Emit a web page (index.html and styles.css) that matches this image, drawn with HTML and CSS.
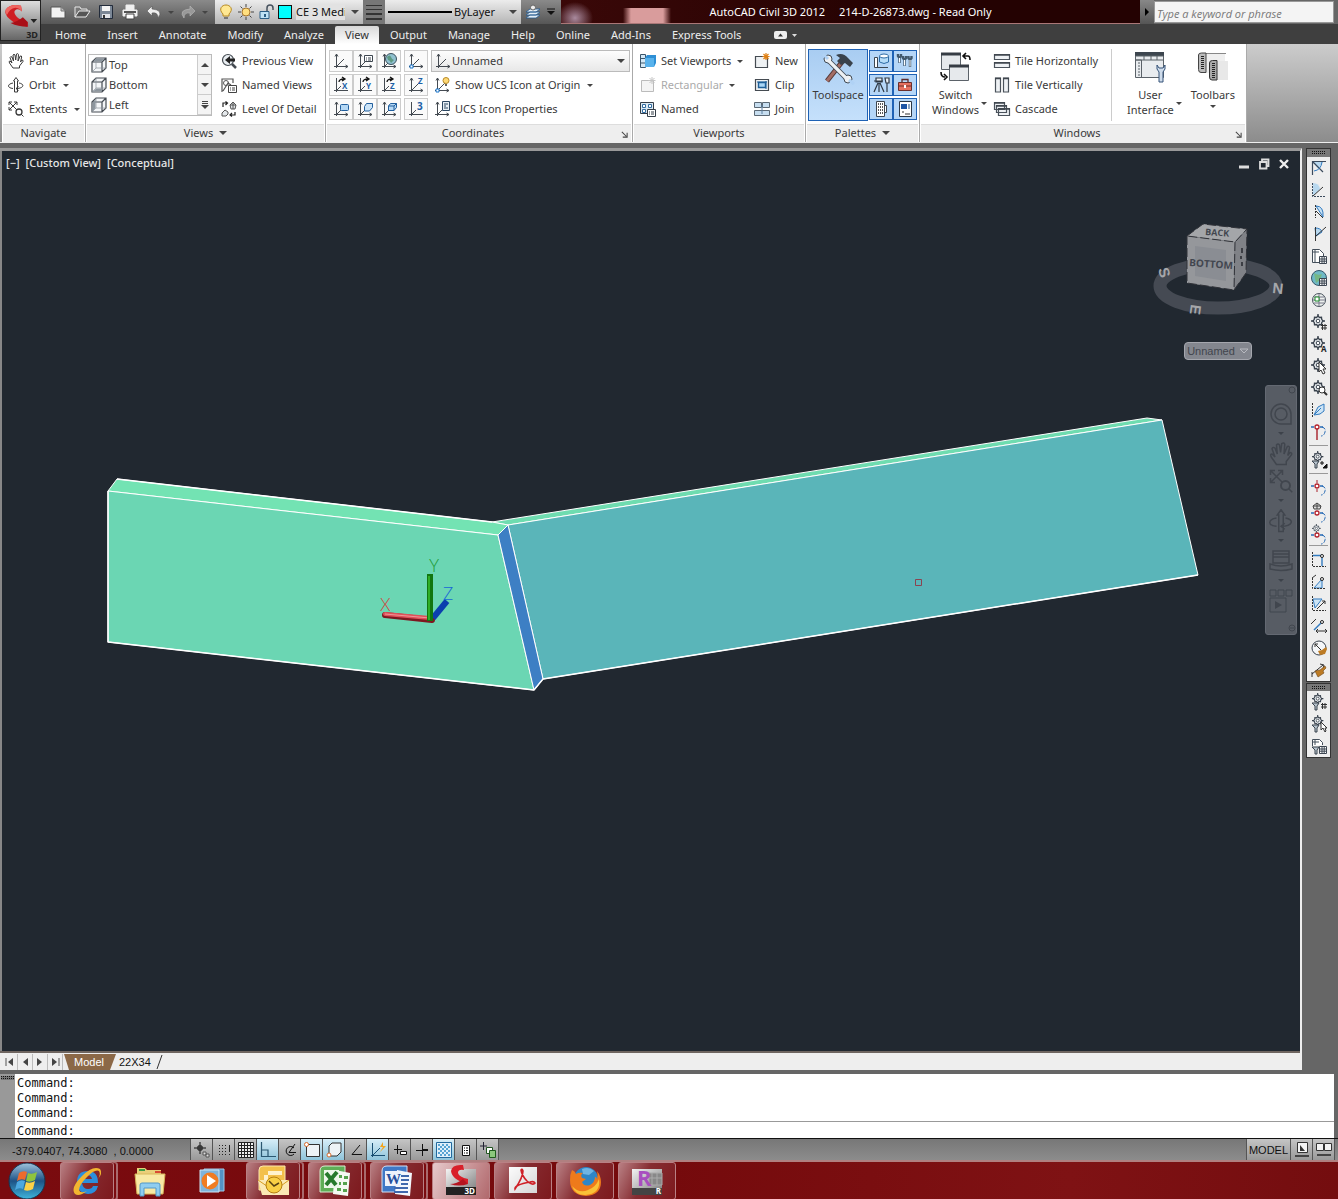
FILE: index.html
```html
<!DOCTYPE html>
<html lang="en">
<head>
<meta charset="utf-8">
<title>AutoCAD Civil 3D 2012 - 214-D-26873.dwg</title>
<link rel="stylesheet" href="styles.css">
</head>
<body>
<svg class="sprite" aria-hidden="true">
  <symbol id="axes" viewBox="0 0 16 16"><path d="M3.500 1v14M1 13.500h14M4 13l7-7M2 3.500L3.500 1 5 3.500M12.500 12l2.500 1.500-2.500 1.500" fill="none" stroke="#454b52"/></symbol>
  <symbol id="cube" viewBox="0 0 16 16"><path d="M1 5l4-4h10v10l-4 4H1zM1 5h10v10M11 5l4-4" fill="#f4f6f8" stroke="#454b52" stroke-width="1.200"/><path d="M5 1v10h10M5 11l-4 4" fill="none" stroke="#8a939c" stroke-width=".7"/></symbol>
  <symbol id="gear" viewBox="0 0 16 16"><path d="M7 0v14M0 7h14" stroke="#39424d" stroke-width="1.400"/><path d="M7 2l1.500 1.500 2-.2.200 2L12 7l-1.300 1.700-.2 2-2-.2L7 12l-1.500-1.500-2 .2-.2-2L2 7l1.300-1.700.2-2 2 .2z" fill="#e9edf0" stroke="#39424d" stroke-width="1.300"/><circle cx="7" cy="7" r="1.800" fill="#fff" stroke="#39424d"/></symbol>
  <symbol id="gridlet" viewBox="0 0 8 8"><path d="M.5.5h7v7h-7zM3 .5v7M5.200.5v7M.5 3h7M.5 5.200h7" fill="#fff" stroke="#3c4652"/></symbol>
  <symbol id="node" viewBox="0 0 16 16"><path d="M0 5h3M9 5h3" stroke="#276bb5" stroke-width="1.400"/><path d="M11 5q4 1 3 5t-4 4" fill="none" stroke="#276bb5" stroke-dasharray="4 1.500"/><circle cx="6" cy="5" r="2" fill="#fff" stroke="#b3202c" stroke-width="1.300"/></symbol>
  <symbol id="hand" viewBox="0 0 16 16"><path d="M5 15L1.500 10Q.5 8 2 8l2 2-2-5.500Q2.500 3 4 4l1.500 4L5 2q1-1.500 2 0l.7 5L8.500 1q1.500-1 2 .5L10 8l2.200-5q1.500-.5 1.500 1L12.500 9l1.500-2q1.500 0 1 1.500L11.500 13v2z" fill="none" stroke="currentColor"/></symbol>
  <symbol id="extents" viewBox="0 0 16 16"><path d="M1 1l8 8M9 1L1 9M1 4V1h3M6 1h3v3M1 6v3h3M13 13l2.500 2.500" fill="none" stroke="currentColor"/><circle cx="11" cy="11" r="3" fill="none" stroke="currentColor" stroke-width="1.300"/></symbol>
  <symbol id="orbit" viewBox="0 0 16 16"><path d="M8 .5L10.500 4H9.500v11h-3V4h-1zM5 6C-1 7-1 11 5 11.500M11 6c6 1 5 5.500-3 5.500M10.500 9.500L8 11.500l2.500 2" fill="none" stroke="currentColor"/></symbol>
  <linearGradient id="orb" x2="0" y2="1"><stop stop-color="#9fc3dd"/><stop offset=".5" stop-color="#1d5285"/><stop offset="1" stop-color="#3fb5dc"/></linearGradient>
  <linearGradient id="steel" x2="1" y2="1"><stop stop-color="#f3f3f3"/><stop offset="1" stop-color="#777"/></linearGradient>
</svg>

<header class="top">
  <button class="app" aria-label="Application menu">
    <svg viewBox="0 0 40 40"><path d="M8 24l19-2 2 4-12 3z" fill="#8d8d8d"/><path d="M20 4Q9 1 4 8q-2 5 4 10 6 6 19 8v-5q-9-2-12-6-4-5 0-7 3-1 6 2z" fill="#cf1f23"/><path d="M20 4Q9 1 4 8q-1 3 1 6 3-7 9-8 4 0 7 4z" fill="#f06661"/><path d="M9 22q7-1 13-6l5 5v5q-10 0-18-4z" fill="#a90f17"/><path d="M30 18h7l-3.500 4z" fill="#222"/></svg>
    <span class="app-tag">3D</span>
  </button>
  <div class="top-rows">
    <div class="titlebar">
      <div class="quick">
        <button aria-label="New"><svg viewBox="0 0 16 16"><path d="M1 3h10l4 4v7H1z" fill="#f2f2f2" stroke="#555"/><path d="M11 3v4h4" fill="#bbb" stroke="#777"/></svg></button>
        <button aria-label="Open"><svg viewBox="0 0 16 16"><path d="M1 13V3h5l1 2h6v3" fill="#777" stroke="#e8e8e8"/><path d="M1 13l4-6h11l-4 6z" fill="#555" stroke="#eee"/></svg></button>
        <button aria-label="Save"><svg viewBox="0 0 16 16"><path d="M1.500 1.500h13v13h-12l-1-1z" fill="#7b8796" stroke="#222b3a"/><path d="M4 2h8v5H4z" fill="#f4f4f4"/><path d="M4 10h8v4H4z" fill="#e2e5ea"/><path d="M5 11h2v3H5z" fill="#333"/></svg></button>
        <button aria-label="Plot"><svg viewBox="0 0 16 16"><path d="M4 6V1h8v5M1 6h14v6H1z" fill="#f0f0f0" stroke="#eee"/><path d="M2 8h12" stroke="#555" stroke-width="2"/><path d="M4 10h8v5H4z" fill="#fff" stroke="#444"/></svg></button>
        <button aria-label="Undo"><svg viewBox="0 0 16 16"><path d="M6 2L1 7l5 5V9q6-1 6 5 6-8-6-9z" fill="#eee" stroke="#555" stroke-width=".6"/></svg></button>
        <i class="caret"></i>
        <button aria-label="Redo"><svg viewBox="0 0 16 16"><path d="M10 2l5 5-5 5V9q-6-1-6 5-6-8 6-9z" fill="#999" stroke="#bbb" stroke-width=".6"/></svg></button>
        <i class="caret"></i>
      </div>
      <div class="combo layer">
        <svg viewBox="0 0 16 16"><path d="M5 10C0 5 4 1 8 1s8 4 3 9v2H5z" fill="#ffe893" stroke="#b88a20"/><path d="M6 13h4v2H6z" fill="#777"/></svg>
        <svg viewBox="0 0 16 16"><path d="M8 0v3M8 13v3M0 8h3M13 8h3M2.500 2.500l2 2M11.500 11.500l2 2M13.500 2.500l-2 2M4.500 11.500l-2 2" stroke="#444"/><circle cx="8" cy="8" r="4" fill="#ffdf7f" stroke="#a8752a"/></svg>
        <svg viewBox="0 0 16 16"><path d="M9 7V4q0-3 3-3t3 3v2" fill="none" stroke="#47525e" stroke-width="1.500"/><path d="M2 7.500h9v7H2z" fill="#bfe3f6" stroke="#2b5f86"/><path d="M6 10h2v3H6z" fill="#2b5f86"/></svg>
        <i class="swatch"></i>
        <select aria-label="Layer"><option>CE 3 Medium</option></select>
        <i class="caret big"></i>
      </div>
      <button class="weights" aria-label="Lineweight"><svg viewBox="0 0 16 20"><path d="M0 3.500h16M0 7.500h16" stroke="#333"/><path d="M0 12h16M0 17h16" stroke="#333" stroke-width="2"/></svg></button>
      <div class="combo linetype">
        <i class="rule"></i>
        <select aria-label="Linetype"><option>ByLayer</option></select>
        <i class="caret big"></i>
      </div>
      <div class="quick tail">
        <button aria-label="Layer properties"><svg viewBox="0 0 16 16"><path d="M1 14l4-3h10l-4 3zM1 11l4-3h10l-4 3zM1 8l4-3h10l-4 3z" fill="#e5eef6" stroke="#235b92" stroke-width=".8"/><circle cx="8" cy="3.500" r="2.500" fill="#eee" stroke="#666"/></svg></button>
        <button aria-label="Customize"><svg viewBox="0 0 8 8"><path d="M0 1h8" stroke="#111"/><path d="M0 3h8L4 7z" fill="#111"/></svg></button>
      </div>
      <h1 class="title"><span>AutoCAD Civil 3D 2012</span><span>214-D-26873.dwg - Read Only</span></h1>
      <button class="expand" aria-label="Show search"><svg viewBox="0 0 6 8"><path d="M1 0l4 4-4 4z" fill="#000"/></svg></button>
      <input class="search" type="text" placeholder="Type a keyword or phrase" aria-label="Search">
    </div>
    <nav class="tabs">
      <button>Home</button><button>Insert</button><button>Annotate</button><button>Modify</button><button>Analyze</button><button class="on">View</button><button>Output</button><button>Manage</button><button>Help</button><button>Online</button><button>Add-Ins</button><button>Express Tools</button>
      <button class="fold" aria-label="Minimize ribbon"><svg viewBox="0 0 24 8"><rect y="0" width="13" height="8" rx="2" fill="#eee"/><path d="M4 5.500h5L6.500 2.500z" fill="#333"/><path d="M18 3h5l-2.500 3z" fill="#ddd"/></svg></button>
    </nav>
  </div>
</header>

<section class="ribbon">
  <section class="panel p-nav">
    <div class="panel-body"><div class="col">
      <button class="cmd"><svg><use href="#hand"/></svg>Pan</button>
      <button class="cmd"><svg><use href="#orbit"/></svg>Orbit<i class="caret"></i></button>
      <button class="cmd"><svg><use href="#extents"/></svg>Extents<i class="caret"></i></button>
    </div></div>
    <h2>Navigate</h2>
  </section>
  <section class="panel p-views">
    <div class="panel-body">
      <div class="gallery">
        <div class="gallery-list">
          <button><svg viewBox="0 0 16 16"><use href="#cube"/><path d="M2 4.500L5.300 1.500H14l-3.300 3z" fill="#8d969e"/></svg>Top</button>
          <button><svg viewBox="0 0 16 16"><use href="#cube"/><path d="M2 14.500L5.300 11.500H11v3z" fill="#8d969e"/></svg>Bottom</button>
          <button><svg viewBox="0 0 16 16"><use href="#cube"/><path d="M1.500 5.500l3-3v8.500l-3 3.500z" fill="#8d969e"/></svg>Left</button>
        </div>
        <div class="gallery-scroll">
          <button aria-label="Up"><svg viewBox="0 0 8 8"><path d="M0 6h8L4 2z"/></svg></button>
          <button aria-label="Down"><svg viewBox="0 0 8 8"><path d="M0 2h8L4 6z"/></svg></button>
          <button aria-label="More"><svg viewBox="0 0 8 8"><path d="M1 0h6v1H1zM1 2h6v1H1zM0 4h8L4 8z"/></svg></button>
        </div>
      </div>
      <div class="col">
        <button class="cmd"><svg viewBox="0 0 16 16"><circle cx="7" cy="7" r="5.500" fill="#e9eef2" stroke="#454b52" stroke-width="1.200"/><path d="M11 11l4 4" stroke="#454b52" stroke-width="2.500"/><path d="M4 7l5-4v2.500h5v3H9V11z" fill="#222"/></svg>Previous View</button>
        <button class="cmd"><svg viewBox="0 0 16 16"><path d="M1 15V2h11v4M2 14l5-8 3 2" fill="none" stroke="#555" stroke-width="1.200"/><circle cx="5" cy="6" r="2.500" fill="none" stroke="#555"/><path d="M7.500 8.500h8v7h-8z" fill="#fff" stroke="#444"/><path d="M9 11h1M11 11h3M9 13h1M11 13h3" stroke="#444"/></svg>Named Views</button>
        <button class="cmd"><svg viewBox="0 0 16 16"><path d="M2 6V2h4M4.500.5L6.500 2l-2 2M14 11v3h-4M11 12l-2 2 2 1.500" fill="none" stroke="#222" stroke-width="1.200"/><path d="M1 15v-3l3-3 3 2v2l-2 2zM9 4l3-3 3 3-1 4h-4zM9 4h6M12 1v7" fill="#e4e8eb" stroke="#555"/></svg>Level Of Detail</button>
      </div>
    </div>
    <h2>Views<i class="caret big"></i></h2>
  </section>
  <section class="panel p-coord">
    <div class="panel-body">
      <div class="tools three">
        <button aria-label="UCS"><svg><use href="#axes"/></svg></button>
        <button aria-label="Named UCS"><svg viewBox="0 0 16 16"><use href="#axes"/><path d="M7.500 2.500h8v6h-8z" fill="#fff" stroke="#3d4650"/><path d="M9 5h1M11 5h3M9 7h1M11 7h3" stroke="#3d4650"/></svg></button>
        <button aria-label="World UCS"><svg viewBox="0 0 16 16"><use href="#axes"/><circle cx="10" cy="6" r="5.500" fill="#8fc0cf" stroke="#3d5260"/><path d="M6 4q3-3 4 0t3 3l-3 3q-1-3-3-3z" fill="#5e9a83"/></svg></button>
        <button aria-label="Rotate X"><svg class="rot" viewBox="0 0 16 16"><path d="M3.500 1v14M1 13.500h14M4 13l4-4" fill="none" stroke="#454b52"/><path d="M6 5q0-3 5-3M9 0l3 2-3 2" fill="none" stroke="#111" stroke-width="1.300"/><text x="9" y="12" class="mark">X</text></svg></button>
        <button aria-label="Rotate Y"><svg class="rot" viewBox="0 0 16 16"><path d="M3.500 1v14M1 13.500h14M4 13l4-4" fill="none" stroke="#454b52"/><path d="M6 5q0-3 5-3M9 0l3 2-3 2" fill="none" stroke="#111" stroke-width="1.300"/><text x="9" y="12" class="mark">Y</text></svg></button>
        <button aria-label="Rotate Z"><svg class="rot" viewBox="0 0 16 16"><path d="M3.500 1v14M1 13.500h14M4 13l4-4" fill="none" stroke="#454b52"/><path d="M6 5q0-3 5-3M9 0l3 2-3 2" fill="none" stroke="#111" stroke-width="1.300"/><text x="9" y="12" class="mark">Z</text></svg></button>
        <button aria-label="View UCS"><svg viewBox="0 0 16 16"><use href="#axes"/><rect x="7.500" y="3.500" width="8" height="6" rx="1" fill="#b5d8f5" stroke="#215f9e"/></svg></button>
        <button aria-label="Object UCS"><svg viewBox="0 0 16 16"><use href="#axes"/><path d="M7.500 5.500l2-3h6v4l-3 3.500h-5z" fill="#cce4f7" stroke="#215f9e"/></svg></button>
        <button aria-label="Face UCS"><svg viewBox="0 0 16 16"><use href="#axes"/><path d="M7.500 5l2-2.500h6v4L13 9.500H7.500zM7.500 5H13v4.500M13 5l2.500-2.500" fill="#b5d8f5" stroke="#215f9e"/></svg></button>
      </div>
      <div class="tools one">
        <button aria-label="UCS origin"><svg viewBox="0 0 16 16"><use href="#axes"/><path d="M2 12h3v3H2z" fill="#fff" stroke="#1673c9"/></svg></button>
        <button aria-label="Z-axis vector"><svg viewBox="0 0 16 16"><use href="#axes"/><text x="10" y="7" class="mark">Z</text></svg></button>
        <button aria-label="3-point UCS"><svg viewBox="0 0 16 16"><path d="M3.500 1v14M1 13.500h14M4 13l4-4" fill="none" stroke="#454b52"/><text x="9" y="9" class="mark large">3</text></svg></button>
      </div>
      <div class="col grow">
        <div class="combo ucs"><svg><use href="#axes"/></svg><select aria-label="Named UCS list"><option>Unnamed</option></select><i class="caret big"></i></div>
        <button class="cmd"><svg viewBox="0 0 16 16"><use href="#axes"/><path d="M2 12h3v3H2z" fill="#fff" stroke="#1673c9"/><circle cx="12" cy="3.500" r="3" fill="#ffd976" stroke="#b98b27"/><path d="M11 7h2v2h-2z" fill="#666"/></svg>Show UCS Icon at Origin<i class="caret"></i></button>
        <button class="cmd"><svg viewBox="0 0 16 16"><use href="#axes"/><path d="M8.500.5h7v9h-7z" fill="#e6eef5" stroke="#2b4661"/><path d="M10 3h4M10 5h2M10 7h4" stroke="#2b4661"/></svg>UCS Icon Properties</button>
      </div>
    </div>
    <h2 class="with-launch">Coordinates<svg class="launch" viewBox="0 0 8 8"><path d="M1 1l5 5M7 2v5H2" fill="none" stroke="#444" stroke-width="1.200"/></svg></h2>
  </section>
  <section class="panel p-vports">
    <div class="panel-body">
      <div class="col left">
        <button class="cmd"><svg viewBox="0 0 16 16"><path d="M.5 1.500h5v13h-5zM.5 5.500h5M.5 10h5" fill="#d5e9f7" stroke="#3d566b"/><path d="M5 5l2-3h9v8l-2 4H5z" fill="#2e8fd5"/><path d="M5 5h9v9H5z" fill="#58b2ec"/></svg>Set Viewports<i class="caret"></i></button>
        <button class="cmd" disabled><svg viewBox="0 0 16 16"><path d="M1.500 3.500h12v11h-12z" fill="#f4f4f4" stroke="#bbb"/><path d="M12 0v7M8.500 3.500h7M9.500 1l5 5M14.500 1l-5 5" stroke="#c4c4c4"/></svg>Rectangular<i class="caret"></i></button>
        <button class="cmd"><svg viewBox="0 0 16 16"><path d="M.5 1.500h13v11H.5z" fill="#dceaf4" stroke="#333c46"/><path d="M2.500 3.500h3v3h-3zM8.500 3.500h3v3h-3zM2.500 8.500h3v3h-3z" fill="#fff" stroke="#316ca0"/><path d="M7.500 8.500h8v7h-8z" fill="#fff" stroke="#333c46"/><path d="M9 11h1M11 11h3M9 13h1M11 13h3" stroke="#333c46"/></svg>Named</button>
      </div>
      <div class="col">
        <button class="cmd"><svg viewBox="0 0 16 16"><path d="M1.500 3.500h12v11h-12z" fill="#eef1f3" stroke="#454b52" stroke-width="1.200"/><path d="M12 0v7M8.500 3.500h7M9.500 1l5 5M14.500 1l-5 5" stroke="#e08013" stroke-width="1.200"/></svg>New</button>
        <button class="cmd"><svg viewBox="0 0 16 16"><path d="M1.500 2.500h13v11h-13z" fill="#eef1f3" stroke="#454b52" stroke-width="1.200"/><path d="M4.500 5.500h7v5h-7z" fill="#a9d5f5" stroke="#1f5f97" stroke-width="1.400"/><path d="M3 5h10M12 4v8" stroke="#1f5f97"/></svg>Clip</button>
        <button class="cmd"><svg viewBox="0 0 16 16"><path d="M.5 1.500h7v5h-7zM8.500 1.500h7v5h-7zM.5 9.500h15v5H.5z" fill="#c7def0" stroke="#5b6874"/><path d="M8 4v9" stroke="#5b7fa0"/></svg>Join</button>
      </div>
    </div>
    <h2>Viewports</h2>
  </section>
  <section class="panel p-pal">
    <div class="panel-body">
      <button class="big-cmd on"><svg viewBox="0 0 32 32"><path d="M5 29L20 10" stroke="#543633" stroke-width="5"/><path d="M5 29L20 10" stroke="#a36d66" stroke-width="3"/><path d="M14 3q7-3 12 3l5 5-3 4-5-4-4 2-4-4 3-3z" fill="#39424c"/><path d="M6 8l19 19" stroke="#3f4953" stroke-width="5"/><circle cx="6" cy="7" r="4" fill="#eef1f4" stroke="#3f4953"/><circle cx="26" cy="27" r="4" fill="#eef1f4" stroke="#3f4953"/><path d="M6 8l19 19" stroke="#eef1f4" stroke-width="3.200"/><path d="M1 2l5 5M27 28l5 4" stroke="#b0d2f5" stroke-width="3"/></svg>Toolspace</button>
      <div class="tools pal">
        <button aria-label="Panorama"><svg viewBox="0 0 16 16"><path d="M1.500 4.500h3v10h-3zM2 14.500h13" fill="#fff" stroke="#3c4650"/><path d="M6.500 3v6q4.500 3 9 0V3" fill="#b6dcf7" stroke="#2e6ca6"/><ellipse cx="11" cy="3" rx="4.500" ry="2" fill="#fff" stroke="#2e6ca6"/></svg></button>
        <button aria-label="Properties"><svg viewBox="0 0 16 16"><path d="M1 1v2l1.500 2v5M4 1v2L2.500 5M6 3v2l1.500 2v6M9 3v2L7.500 7M11.500 3v2l1.500 2v7M14.500 3v2L13 7" fill="none" stroke="#42596d" stroke-width="2.400"/><path d="M2.500 5v4.500M7.500 7v5.500M13 7v6.500" stroke="#fff"/></svg></button>
        <button aria-label="Survey"><svg viewBox="0 0 16 16"><path d="M5 6L1 15M6 6v9M7 6l4 9M1 4h9M3 1h6v4H3zM12 1h4v5h-3zM14 6v9" fill="#e8eef4" stroke="#2e3843" stroke-width="1.200"/></svg></button>
        <button aria-label="Toolbox"><svg viewBox="0 0 16 16"><path d="M5 5V2.500h6V5" fill="none" stroke="#5b2b2a" stroke-width="1.300"/><path d="M1.500 5.500h13v8h-13z" fill="#e5705f" stroke="#6b2f2d"/><path d="M1.500 9h13" stroke="#6b2f2d"/><path d="M7 8h2v3H7z" fill="#fff"/></svg></button>
        <button aria-label="Calculator"><svg viewBox="0 0 16 16"><path d="M3.500.5h8v15h-8zM11.500 4.500h2v7h-2" fill="#fff" stroke="#3c4650"/><path d="M5 3h1M7 3h1M9 3h1M5 6h1M7 6h1M9 6h1M5 9h1M7 9h1M9 9h1M5 12h1M7 12h1M9 12h1" stroke="#222" stroke-width="1.500"/></svg></button>
        <button aria-label="Design center"><svg viewBox="0 0 16 16"><path d="M2.500.5h12v15h-12z" fill="#fff" stroke="#2c3947"/><path d="M4 3h6v5H4z" fill="#1f56a5"/><path d="M11 3h2v5h-2z" fill="#8ca5c2"/><path d="M5 11h2M8 13h5" stroke="#333"/></svg></button>
      </div>
    </div>
    <h2>Palettes<i class="caret big"></i></h2>
  </section>
  <section class="panel p-win">
    <div class="panel-body">
      <button class="big-cmd side"><svg viewBox="0 0 32 32"><path d="M2.500 2.500h19v16h-19z" fill="#e6e9ec" stroke="#5b6269"/><path d="M2 3h20" stroke="#363c44" stroke-width="3"/><path d="M10.500 14.500h19v15h-19z" fill="#e6e9ec" stroke="#5b6269"/><path d="M10 15h20" stroke="#363c44" stroke-width="3"/><path d="M24 5h5q2 0 2 4M27 2l-3 3 3 3M2 21q0 5 4 5M5 23l3 3-3 3" fill="none" stroke="#111" stroke-width="1.600"/></svg><span>Switch<br>Windows</span><i class="caret"></i></button>
      <div class="col tile">
        <button class="cmd"><svg viewBox="0 0 16 16"><path d="M.5 1.500h15v5H.5zM.5 9.500h15v5H.5z" fill="#eef1f4" stroke="#4a525b" stroke-width="1.200"/><path d="M0 2h16M0 10h16" stroke="#3f464e" stroke-width="1.500"/></svg>Tile Horizontally</button>
        <button class="cmd"><svg viewBox="0 0 16 16"><path d="M1.500 1v14h5V1zM9.500 1v14h5V1z" fill="#eef1f4" stroke="#4a525b" stroke-width="1.200"/><path d="M1 1.500h6M9 1.500h6" stroke="#3f464e" stroke-width="1.500"/></svg>Tile Vertically</button>
        <button class="cmd"><svg viewBox="0 0 16 16"><path d="M.5 1.500h10v7H.5zM2.500 4.500h10v7h-10zM4.500 7.500h11v7h-11z" fill="#eef1f4" stroke="#4a525b" stroke-width="1.200"/><path d="M0 2h11M2 5h11M4 8h12" stroke="#3f464e" stroke-width="1.500"/></svg>Cascade</button>
      </div>
      <div class="right-cmds">
        <button class="big-cmd side"><svg viewBox="0 0 32 32"><path d="M1.500 1.500h28v25h-28z" fill="#e9ecef" stroke="#5b6269"/><path d="M1 3h29" stroke="#3d464f" stroke-width="4"/><path d="M1.500 5h28v4h-28zM1.500 9h6v18M10 5v4M17 5v4M23 5v4M4 12h2M4 15h2M4 18h2M4 21h2M4 24h2" fill="none" stroke="#5b6269"/><path d="M23 14v4l2 3v10h4V21l2-3v-4l-2 3h-4z" fill="#cfdceb" stroke="#345379"/></svg><span>User<br>Interface</span><i class="caret"></i></button>
        <button class="big-cmd"><svg viewBox="0 0 32 32"><path d="M8 2h20v20H8z" fill="#efefef"/><path d="M4 2.500h25" stroke="#888"/><path d="M1.500 4q0-2 3-2H9v19.500H4q-2.500 0-2.500-3z" fill="#bbb" stroke="#444"/><path d="M20 10h11v19H20z" fill="#e8e8e8"/><path d="M12.500 12q0-2.500 3-2.500H20V29h-5q-2.500 0-2.500-3z" fill="#aaa" stroke="#333"/><path d="M5.500 5v14M16.500 12v15" stroke="#222" stroke-width="3" stroke-dasharray="1 1"/></svg>Toolbars<i class="caret"></i></button>
      </div>
    </div>
    <h2 class="with-launch">Windows<svg class="launch" viewBox="0 0 8 8"><path d="M1 1l5 5M7 2v5H2" fill="none" stroke="#444" stroke-width="1.200"/></svg></h2>
  </section>
</section>

<main class="work">
  <div class="doc">
    <div class="canvas">
      <svg class="scene" viewBox="2 151 1298 900" role="img" aria-label="Wall model">
        <g stroke="#fff" stroke-linejoin="round">
          <path d="M492 522L1147 418l15 2L508 525z" fill="#6fdcb0"/>
          <path d="M508 525L1162 420l36 155L543 679z" fill="#5ab5b9"/>
          <path d="M108 491l9-12 375 43 16 3-10 10z" fill="#73e3b3"/>
          <path d="M108 491l390 44 36 155-426-48z" fill="#6bd6b3"/>
          <path d="M498 535l10-10 35 154-9 11z" fill="#3d7fc4"/>
          <path d="M117 479l375 43M108 491v151l426 48 9-11 655-104" fill="none" stroke-width="1.500"/>
        </g>
        <path d="M385 615l47 5" stroke="#7e1720" stroke-width="6" stroke-linecap="round"/><path d="M385 614l45 4" stroke="#e0505a" stroke-width="4" stroke-linecap="round"/><path d="M385 614l45 4" stroke="#ee9797"/>
        <path d="M433 618l14-17" stroke="#0b3fae" stroke-width="6"/>
        <path d="M430 621v-47" stroke="#12760f" stroke-width="6"/><path d="M429 620v-44" stroke="#2fae25" stroke-width="2"/>
        <text x="380" y="611" class="axis" fill="#d0463f">X</text><text x="429" y="572" class="axis" fill="#1c9b35">Y</text><text x="443" y="600" class="axis" fill="#1766d6">Z</text>
        <path d="M915.500 579.500h6v6h-6z" fill="none" stroke="#8b4350"/>
      </svg>
      <div class="vp-label"><button>[−]</button><button>[Custom View]</button><button>[Conceptual]</button></div>
      <div class="vp-win">
        <button aria-label="Minimize"><svg viewBox="0 0 12 12"><path d="M1 9h10" stroke="#ddd" stroke-width="3"/></svg></button>
        <button aria-label="Restore"><svg viewBox="0 0 12 12"><path d="M4 3V1.500h6.500V8H9M2 4h6.500v6.500H2z" fill="none" stroke="#ddd" stroke-width="1.800"/></svg></button>
        <button aria-label="Close"><svg viewBox="0 0 12 12"><path d="M2 2l8 8M10 2l-8 8" stroke="#eee" stroke-width="2.400"/></svg></button>
      </div>
      <div class="cube-box">
        <svg viewBox="1150 218 136 102" role="img" aria-label="View cube">
          <ellipse cx="1218" cy="286" rx="58" ry="22" fill="none" stroke="#454a53" stroke-width="13"/>
          <path d="M1187 236l16-12 44 5-12 13z" fill="#a4a6a9"/><path d="M1187 236l48 6-1 48-47-7z" fill="#95979b"/><path d="M1235 242l12-13-1 44-12 17z" fill="#808287"/>
          <path d="M1195 246l31 4v31l-31-5z" fill="#8a8d93"/>
          <path d="M1187 236l16-12 44 5-12 13zM1235 242l-1 48 12-17 1-44M1187 236v47l47 7" fill="none" stroke="#303238" stroke-dasharray="9 3"/>
          <path d="M1242 248v5M1241 256v3M1242 262v4" stroke="#3c3e44" stroke-width="2"/>
          <text x="1189" y="266" class="face" transform="rotate(4 1189 266)">BOTTOM</text>
          <text x="1205" y="235" class="face small" transform="rotate(4 1205 235)">BACK</text>
          <text x="1158" y="269" class="wind" transform="rotate(75 1158 269)">S</text>
          <text x="1272" y="293" class="wind" transform="rotate(6 1272 293)">N</text>
          <text x="1191" y="304" class="wind" transform="rotate(98 1191 304)">E</text>
        </svg>
        <button class="ucs-pick">Unnamed<svg viewBox="0 0 10 6"><path d="M1 1h8L5 5z" fill="none" stroke="#b8bac0"/></svg></button>
      </div>
      <div class="navbar">
        <button class="tiny" aria-label="Close bar"><svg viewBox="0 0 8 8"><circle cx="4" cy="4" r="3" fill="none" stroke="currentColor"/></svg></button>
        <button aria-label="Wheel"><svg viewBox="0 0 24 24"><path d="M22 12a10 10 0 1 0-10 10h10z" fill="none" stroke="currentColor" stroke-width="1.500"/><circle cx="12" cy="12" r="6" fill="none" stroke="currentColor" stroke-width="1.500"/></svg></button><i class="caret"></i>
        <button aria-label="Pan"><svg><use href="#hand"/></svg></button>
        <button aria-label="Zoom"><svg><use href="#extents"/></svg></button><i class="caret"></i>
        <button aria-label="Orbit"><svg><use href="#orbit"/></svg></button><i class="caret"></i>
        <button aria-label="Look"><svg viewBox="0 0 24 24"><path d="M4 2h16v12H4zM4 5h16M4 8h16M1 15q11 4 22 0v5q-11 3-22 0z" fill="none" stroke="currentColor" stroke-width="1.500"/></svg></button><i class="caret"></i>
        <button aria-label="ShowMotion"><svg viewBox="0 0 24 24"><path d="M1 1h6v6H1zM9 1h6v6H9zM17 1h6v6h-6zM1 9h16v14H1z" fill="none" stroke="currentColor"/><path d="M6 12l7 4-7 4z" fill="currentColor"/></svg></button>
        <button class="tiny" aria-label="Bar options"><svg viewBox="0 0 8 8"><circle cx="4" cy="4" r="3" fill="none" stroke="currentColor"/><path d="M2 4h4" stroke="currentColor"/></svg></button>
      </div>
    </div>
    <div class="sheets">
      <button class="step" aria-label="First"><svg viewBox="0 0 10 10"><path d="M1 1v8" stroke="#555"/><path d="M8 1v8L3 5z"/></svg></button>
      <button class="step" aria-label="Previous"><svg viewBox="0 0 10 10"><path d="M8 1v8L3 5z"/></svg></button>
      <button class="step" aria-label="Next"><svg viewBox="0 0 10 10"><path d="M2 1v8l5-4z"/></svg></button>
      <button class="step" aria-label="Last"><svg viewBox="0 0 10 10"><path d="M9 1v8" stroke="#555"/><path d="M2 1v8l5-4z"/></svg></button>
      <button class="sheet on">Model</button>
      <button class="sheet">22X34</button>
      <svg class="slash" viewBox="0 0 7 16"><path d="M1 15L6 1" stroke="#333"/></svg>
    </div>
  </div>
  <aside class="docks">
    <div class="dock"><i class="grip"></i>
      <button aria-label="Angle"><svg viewBox="0 0 16 16"><path d="M2 2h10L7 9z" fill="#b8d8ef"/><path d="M1.500 15V1.500H15M2 2l10 10" fill="none" stroke="#3b4a5c" stroke-width="1.200"/><path d="M3 11q7-1 8-9" fill="none" stroke="#327bc0"/></svg></button>
      <button aria-label="Azimuth"><svg viewBox="0 0 16 16"><path d="M2 1q6 0 7 6l-7 7z" fill="#b8d8ef"/><path d="M1.500 1v13.500H15" fill="none" stroke="#3b4a5c" stroke-dasharray="2 1"/><path d="M2 14L12 5" stroke="#333"/></svg></button>
      <button aria-label="Deflection"><svg viewBox="0 0 16 16"><path d="M5 2q8 0 7 11z" fill="#c7e0f3" stroke="#327bc0"/><path d="M4.500 1v13" stroke="#333" stroke-dasharray="2 1"/><path d="M5 7l7 7" stroke="#333"/></svg></button>
      <button aria-label="Bearing"><svg viewBox="0 0 16 16"><path d="M4 2q6 0 7 4l-6 4z" fill="#b8d8ef" stroke="#327bc0"/><path d="M4.500 1v14M5 10l10-9" stroke="#333"/></svg></button>
      <button aria-label="Station"><svg viewBox="0 0 16 16"><path d="M1.500 1.500h7l4 4v9h-11zM4 2v12M2 4h6" fill="#fff" stroke="#434e5a"/><use href="#gridlet" x="8" y="8" width="8" height="8"/></svg></button>
      <button aria-label="World grid"><svg viewBox="0 0 16 16"><circle cx="8" cy="8" r="7.500" fill="#6fb9c6" stroke="#35566b"/><path d="M3 3q4 3 8 1l-2 6-4 3z" fill="#76b784"/><use href="#gridlet" x="8" y="8" width="8" height="8"/></svg></button>
      <button aria-label="Globe"><svg viewBox="0 0 16 16"><circle cx="8" cy="8" r="6.500" fill="#edf1ee" stroke="#46505b"/><path d="M8 1.500v13M1.500 8h13M3 5h10M3 11h10" stroke="#778"/><path d="M4 5h4v4H4z" fill="#fff" stroke="#1d8d2b"/></svg></button>
      <button aria-label="Point number"><svg viewBox="0 0 16 16"><use href="#gear" width="16" height="16"/><path d="M11.500 10v6M14 10v6M10 11.500h6M10 14h6" stroke="#333"/></svg></button>
      <button aria-label="Point name"><svg viewBox="0 0 16 16"><use href="#gear" width="16" height="16"/><text x="10" y="16" class="letter">A</text></svg></button>
      <button aria-label="Point pick"><svg viewBox="0 0 16 16"><use href="#gear" width="16" height="16"/><path d="M8 4v10l2-2 2 4 2-1-2-4h3z" fill="#fff" stroke="#333"/></svg></button>
      <button aria-label="Point zoom"><svg viewBox="0 0 16 16"><use href="#gear" width="16" height="16"/><circle cx="11" cy="10" r="3" fill="#fff" stroke="#333"/><path d="M13 12l3 3" stroke="#333" stroke-width="2"/></svg></button>
      <button aria-label="Slope"><svg viewBox="0 0 16 16"><path d="M1.500 1v14" stroke="#333" stroke-dasharray="2 1"/><path d="M3 13l4-8 6-3v7l-4 3zM3 13l7-7" fill="#cde4f5" stroke="#327bc0"/></svg></button>
      <button aria-label="Tangent"><svg viewBox="0 0 16 16"><use href="#node" y="-2" width="16" height="16"/><path d="M6 5v11" stroke="#a8202a" stroke-width="1.400"/></svg></button>
      <hr>
      <button aria-label="Filter"><svg viewBox="0 0 16 16"><use href="#gear" x="1" y="-1" width="13" height="13"/><path d="M1 9h7l-2 3v4H4v-4z" fill="#b9c5cf" stroke="#39424d"/><path d="M11 9v4M9 11h4M16 12v4h-4z" fill="#111" stroke="#111"/></svg></button>
      <hr>
      <button aria-label="Curve"><svg viewBox="0 0 16 16"><use href="#node" y="1" width="16" height="16"/><path d="M6 0v3M6 9v3" stroke="#a8202a"/></svg></button>
      <button aria-label="Curve point"><svg viewBox="0 0 16 16"><use href="#node" y="6" width="16" height="16"/><path d="M2 4l4-3 4 3-1 3H3zM2 4h8M6 1v6" fill="#ddd" stroke="#444"/></svg></button>
      <button aria-label="Curve gear"><svg viewBox="0 0 16 16"><use href="#node" y="6" width="16" height="16"/><use href="#gear" x="1" y="0" width="10" height="10"/></svg></button>
      <hr>
      <button aria-label="Side offset"><svg viewBox="0 0 16 16"><path d="M1.500 0v14.500H15" fill="none" stroke="#333" stroke-dasharray="2 1"/><path d="M2 3.500h9M11 4v10" stroke="#327bc0" stroke-width="1.400"/><circle cx="11" cy="4" r="1.500" fill="#fff" stroke="#222"/></svg></button>
      <button aria-label="Side angle"><svg viewBox="0 0 16 16"><path d="M3 14l8-9v9z" fill="#cde4f5" stroke="#327bc0"/><path d="M1.500 4v10.500H15" fill="none" stroke="#333" stroke-dasharray="2 1"/><path d="M1 4l4-3" stroke="#333"/><circle cx="11" cy="5" r="1.500" fill="#fff" stroke="#222"/></svg></button>
      <button aria-label="Side slope"><svg viewBox="0 0 16 16"><path d="M2 3h9L4 12z" fill="#cde4f5" stroke="#327bc0"/><path d="M1.500 0v14.500H15" fill="none" stroke="#333" stroke-dasharray="2 1"/><path d="M6 13l8-8M11 5h3v3" fill="none" stroke="#333"/></svg></button>
      <button aria-label="Line extend"><svg viewBox="0 0 16 16"><path d="M3 12L11 4" stroke="#327bc0" stroke-width="1.400"/><path d="M0 6l5-5M5 13h11M7 11l-2 2 2 2M14 11l2 2-2 2" fill="none" stroke="#333"/><circle cx="11" cy="4" r="1.500" fill="#fff" stroke="#222"/></svg></button>
      <button aria-label="Circle tool"><svg viewBox="0 0 16 16"><circle cx="8" cy="8" r="7" fill="#f4f6f8" stroke="#39424d"/><path d="M4 4l6 6M4 7V4h3" fill="none" stroke="#333"/><path d="M7 11l4-1 4-3 1 2-2 5-5 1z" fill="#bd7b24"/></svg></button>
      <button aria-label="Brush"><svg viewBox="0 0 16 16"><path d="M1 15v-5M1 12l11-9M9 2l4 1-1 4" fill="none" stroke="#333"/><path d="M4 9l5-1 5-4 1 2-3 3 1 2-6 4z" fill="#bd7b24" stroke="#6f4512" stroke-width=".6"/></svg></button>
    </div>
    <div class="dock"><i class="grip"></i>
      <button aria-label="Filter number"><svg viewBox="0 0 16 16"><use href="#gear" x="1" y="-1" width="13" height="13"/><path d="M1 9h7l-2 3v4H4v-4z" fill="#b9c5cf" stroke="#39424d"/><path d="M11.500 9v6M14 9v6M10 10.500h6M10 13h6" stroke="#333"/></svg></button>
      <button aria-label="Filter pick"><svg viewBox="0 0 16 16"><use href="#gear" x="1" y="-1" width="13" height="13"/><path d="M1 9h7l-2 3v4H4v-4z" fill="#b9c5cf" stroke="#39424d"/><path d="M10 6v8l2-2 2 4 1-1-1-3h2z" fill="#fff" stroke="#333"/></svg></button>
      <button aria-label="Filter sheet"><svg viewBox="0 0 16 16"><path d="M1.500 8V1.500h7l3 3V7M4 2v5M2 4h6" fill="#fff" stroke="#434e5a"/><path d="M1 9h7l-2 3v4H4v-4z" fill="#b9c5cf" stroke="#39424d"/><use href="#gridlet" x="8" y="8" width="8" height="8"/></svg></button>
    </div>
  </aside>
</main>

<section class="console">
  <div class="console-side"><i class="grip"></i></div>
  <div class="console-text">
    <p>Command:</p><p>Command:</p><p>Command:</p>
    <label class="prompt">Command:<input type="text"></label>
  </div>
</section>

<footer class="status">
  <output class="coords">-379.0407, 74.3080 &nbsp;, 0.0000</output>
  <div class="modes">
    <button aria-label="Infer"><svg viewBox="0 0 16 16"><path d="M0 6h12M6 0v12M4 4h4v4H4z" fill="none" stroke="#111"/><path d="M9 10h3v3H9zM12 12h3v3h-3z" fill="#ddd" stroke="#555"/></svg></button>
    <button aria-label="Snap"><svg viewBox="0 0 16 16"><path d="M3 3.500h9M3 6.500h9M3 9.500h9M3 12.500h9" stroke="#222" stroke-dasharray="1 2"/><path d="M13.500 3v7M13.500 12v1" stroke="#222"/></svg></button>
    <button aria-label="Grid"><svg viewBox="0 0 16 16"><path d="M.5.5h15v15H.5zM3.500 0v16M6.500 0v16M9.500 0v16M12.500 0v16M0 3.500h16M0 6.500h16M0 9.500h16M0 12.500h16" fill="#eee" stroke="#222"/></svg></button>
    <button class="on" aria-label="Ortho"><svg viewBox="0 0 16 16"><path d="M1.500 0v14.500H16M2 8h6v6" fill="none" stroke="#2b5871" stroke-width="1.200"/></svg></button>
    <button aria-label="Polar"><svg viewBox="0 0 16 16"><path d="M13 2L7 10.500h7M12 6a4.500 4.500 0 1 0 0 6" fill="none" stroke="#111"/></svg></button>
    <button class="on" aria-label="Object snap"><svg viewBox="0 0 16 16"><path d="M2.500 2.500h13v12h-13z" fill="#eef3f6" stroke="#333"/><circle cx="2.500" cy="2.500" r="2" fill="#fff" stroke="#d96b2a"/></svg></button>
    <button class="on" aria-label="3D snap"><svg viewBox="0 0 16 16"><path d="M3 4l3-3h9v9l-4 4H3z" fill="#eef3f6" stroke="#333"/><circle cx="3" cy="13" r="2" fill="#fff" stroke="#d96b2a"/></svg></button>
    <button aria-label="Tracking"><svg viewBox="0 0 16 16"><path d="M12 3L4 12.500h10" fill="none" stroke="#111"/></svg></button>
    <button class="on" aria-label="Dynamic UCS"><svg viewBox="0 0 16 16"><path d="M2.500 1v14M1 13.500h14M3 13l7-7" stroke="#194f72" fill="none"/><path d="M13 0l-3 5h3l-3 5 6-6h-3z" fill="#f3a51d"/></svg></button>
    <button aria-label="Dynamic input"><svg viewBox="0 0 16 16"><path d="M2 7.500h8M5.500 3v9M8.500 9.500h6v3h-6z" fill="#fff" stroke="#111"/></svg></button>
    <button aria-label="Lineweight"><svg viewBox="0 0 16 16"><path d="M2 8.500h6M8.500 2v12" stroke="#111"/><path d="M8 8h6" stroke="#111" stroke-width="2"/></svg></button>
    <button class="on" aria-label="Transparency"><svg viewBox="0 0 16 16"><path d="M.5.5h15v15H.5z" fill="#dff0fa" stroke="#226a9e"/><path d="M2 3h12M2 7h12M2 11h12" stroke="#57a4d3" stroke-width="2" stroke-dasharray="2 2"/><path d="M4 5h10M4 9h10M4 13h10" stroke="#57a4d3" stroke-width="2" stroke-dasharray="2 2"/></svg></button>
    <button aria-label="Quick properties"><svg viewBox="0 0 16 16"><path d="M4.500 3.500h7v10h-7z" fill="#fff" stroke="#111"/><path d="M6 6h1M8 6h2M6 8.500h1M8 8.500h2M6 11h1M8 11h2" stroke="#111"/></svg></button>
    <button aria-label="Selection cycling"><svg viewBox="0 0 16 16"><path d="M0 4h7M3.500 0v8" stroke="#223"/><path d="M6.500 5.500h6v6h-6z" fill="#fff" stroke="#225522"/><path d="M9.500 8.500h6v7h-6z" fill="#8bc77c" stroke="#1f5a1c"/></svg></button>
  </div>
  <div class="spaces">
    <button class="model">MODEL</button>
    <button aria-label="Layout"><svg viewBox="0 0 16 16"><path d="M3.500.5h10v10h-10z" fill="#f4f4f4" stroke="#333"/><path d="M6 3v6h5z" fill="#333"/><path d="M1 14h14" stroke="#444" stroke-width="2"/></svg></button>
    <button aria-label="Quick view"><svg viewBox="0 0 16 16"><path d="M.5 1.500h7v7h-7zM8.500 1.500h7v7h-7z" fill="#f4f4f4" stroke="#333"/><path d="M1 13h14" stroke="#444" stroke-width="2"/></svg></button>
  </div>
</footer>

<nav class="taskbar">
  <button class="start" aria-label="Start"><svg viewBox="0 0 38 38"><circle cx="19" cy="19" r="18" fill="url(#orb)" stroke="#17344f"/><path d="M11 11q4-3 8-1l-2 8q-4-2-8 1z" fill="#ed6b2d"/><path d="M20 11q4 2 9-1l-2 8q-5 3-9 1z" fill="#8fc43d"/><path d="M9 20q4-3 8-1l-2 8q-4-2-8 1z" fill="#4ba8e0"/><path d="M18 20q4 2 9-1l-2 8q-5 3-9 1z" fill="#fbd147"/></svg></button>
  <button class="task stack" aria-label="Internet Explorer"><svg viewBox="0 0 32 32"><path d="M27 18H11q1 6 6 6 4 0 5-3h5q-2 8-10 8Q6 28 6 17T17 6q10 0 10 12zm-6-4q-1-4-5-4t-5 4z" fill="#2b8fdd"/><path d="M29 4Q22 0 11 11-1 23 4 29q4 3 12-3-7 3-8-1 0-5 8-13T28 6q2 3-1 8 5-6 2-10z" fill="#f2b630"/></svg></button>
  <button class="task plain" aria-label="Explorer"><svg viewBox="0 0 32 32"><path d="M3 3h8l2 2h14v22H3z" fill="#e9cf7a"/><path d="M5 4h6v2H5z" fill="#3c9e46"/><path d="M21 6h6v2h-6z" fill="#d94b35"/><path d="M1 9h30l-2 20H3z" fill="#f8e9a4" stroke="#d8b75a"/><path d="M6 31V20q0-2 2-2h16q2 0 2 2v11h-4v-8H10v8z" fill="#8fcdf0" stroke="#5398c8"/></svg></button>
  <button class="task plain" aria-label="Media Player"><svg viewBox="0 0 32 32"><path d="M8 4h20v22H8z" fill="#5493c4" stroke="#9ecbe9"/><path d="M4 5h19v22H4z" fill="#7fb4dc" stroke="#cfe5f5"/><circle cx="14" cy="16" r="8.500" fill="#f07c23"/><path d="M11 10l9 6-9 6z" fill="#fff"/></svg></button>
  <button class="task stack" aria-label="Outlook"><svg viewBox="0 0 32 32"><path d="M2 5q0-4 4-4h22v24H2z" fill="#f3c04a" stroke="#fce9b0"/><path d="M7 6h18v4H7zM7 6v14h4V6" fill="#fff2cc"/><path d="M1 15h31v15H5z" fill="#fbe9b4"/><path d="M1 15l16 11 15-11" fill="none" stroke="#d79c1f"/><circle cx="17" cy="20" r="8" fill="#f8cf45" stroke="#b57f10"/><path d="M12 16l5 5 5-3" fill="none" stroke="#554013" stroke-width="1.500"/></svg></button>
  <button class="task stack" aria-label="Excel"><svg viewBox="0 0 32 32"><path d="M1 6q0-5 5-5h20v26H1z" fill="#5fae57" stroke="#d7efd2"/><path d="M16 5l15 3-2 23-15-2z" fill="#f4faf2"/><path d="M19 10h4v3h-4zM25 11h4v3h-4zM18 17h4v3h-4zM24 17h4v3h-4zM18 23h4v3h-4zM24 24h4v3h-4z" fill="#55a34c"/><path d="M5 5h15v18H5z" fill="#eef7ec"/><path d="M7 8l10 12M18 7L7 20" stroke="#277a2d" stroke-width="4"/></svg></button>
  <button class="task stack" aria-label="Word"><svg viewBox="0 0 32 32"><path d="M1 6q0-5 5-5h20v26H1z" fill="#3f78c6" stroke="#d3e1f5"/><path d="M16 5l15 3-2 23-15-2z" fill="#f4f7fc"/><path d="M20 11h8M20 15h8M19 19h8M13 23h14M13 27h14" stroke="#3f68ad" stroke-width="2"/><path d="M4 6h16v15H4z" fill="#eef3fb"/></svg><span class="word">W</span></button>
  <button class="task active" aria-label="Civil 3D"><svg viewBox="0 0 32 32"><path d="M1 4h30v26H1z" fill="url(#steel)"/><path d="M1 22h30v8H1z" fill="#222"/><path d="M18 0Q7-1 6 6q1 9 17 13v-5q-9-2-10-6 0-4 6-3z" fill="#d81f2a"/><path d="M5 19q7 0 13-5l5 5q-9 3-18 0z" fill="#b51520"/></svg><span class="badge">3D</span></button>
  <button class="task" aria-label="Adobe Reader"><svg viewBox="0 0 32 32"><path d="M2 2h28v26H2z" fill="url(#steel)"/><path d="M2 2h28v26H2z" fill="#fff" fill-opacity=".7"/><path d="M8 24q-1-4 15-7 4-1 5 1-2 3-8-2-5-5-6-11 1-2 2 1 0 6-8 18z" fill="none" stroke="#cf2027" stroke-width="1.600"/></svg></button>
  <button class="task" aria-label="Firefox"><svg viewBox="0 0 32 32"><circle cx="17" cy="14" r="12" fill="#2f86c6"/><path d="M13 4q7-3 12 2l-5 4-6-1z" fill="#6fb5e3"/><path d="M3 5q3 1 4 4 3-2 7-1-3 2-1 5l4 1-4 3q2 5 8 3 5-3 5-8 2 0 2 3 1-6 0-9 4 5 4 11 0 13-15 14Q1 30 1 15q0-6 2-10z" fill="#ee7a1b"/><path d="M30 14q2 15-14 16Q6 30 3 21q7 8 16 4 8-3 11-11z" fill="#fac237"/></svg></button>
  <button class="task" aria-label="Revit"><svg viewBox="0 0 32 32"><path d="M1 4h30v26H1z" fill="url(#steel)"/><path d="M1 23h30v7H1z" fill="#444"/><path d="M18 8h13v12H18zM21 8v12M26 8v12M18 13h13" fill="#888" stroke="#aaa"/></svg><span class="revit">R</span><span class="badge">R</span></button>
</nav>
</body>
</html>
```
FILE: styles.css
```css
* { box-sizing: border-box; }
body {
  margin: 0;
  min-height: 100vh;
  display: flex;
  flex-direction: column;
  background: #666;
  color: #3a3a3a;
  font: 11px/16px "Noto Sans", "Open Sans", sans-serif;
}
button {
  margin: 0;
  padding: 0;
  border: 0;
  background: none;
  color: inherit;
  font: inherit;
  display: flex;
  align-items: center;
  justify-content: center;
}
button svg, .combo svg { width: 16px; height: 16px; flex: none; overflow: visible; }
h1, h2, p { margin: 0; font: inherit; }
.sprite { position: absolute; width: 0; height: 0; }

.caret {
  flex: none;
  width: 0;
  height: 0;
  border: 3px solid transparent;
  border-top-color: #444;
  border-bottom-width: 0;
}
.caret.big { border-width: 4px 4px 0; }

/* title bar */
.top { display: flex; background: #3f3f3f; height: 44px; flex: none; }
.app {
  position: relative;
  width: 41px;
  height: 41px;
  border: 1px solid #222;
  background: linear-gradient(#ddd, #666);
}
.app svg { width: 38px; height: 38px; }
.app-tag { position: absolute; right: 2px; bottom: -1px; font: bold 9px/12px "Open Sans", sans-serif; color: #222; }
.top-rows { flex: 1; min-width: 0; }
.titlebar { display: flex; align-items: stretch; height: 24px; background: #666; }
.quick { display: flex; align-items: center; gap: 8px; width: 174px; padding-left: 9px; background: linear-gradient(#8a8a8a, #565656); }
.quick.tail { width: 40px; padding-left: 4px; gap: 6px; }
.quick.tail button:last-child svg { width: 8px; height: 8px; }
.quick > .caret { margin: 0 -2px; }
.combo { position: relative; display: flex; align-items: center; background: linear-gradient(#ececec, #b5b5b5); }
.combo .caret { position: absolute; right: 4px; top: 50%; margin-top: -2px; pointer-events: none; }
.combo select {
  appearance: none;
  border: 0;
  background: none;
  padding: 0;
  margin: 0;
  font: inherit;
  color: #111;
  min-width: 0;
}
.layer { width: 148px; gap: 4px; padding: 0 18px 0 3px; }
.layer select { width: 49px; background: #e2e2e2; }
.swatch { width: 14px; height: 14px; background: #0ff; border: 1px solid #111; flex: none; }
.weights { width: 22px; background: #777; }
.weights svg { height: 20px; }
.linetype { width: 136px; padding-left: 3px; }
.linetype select { flex: 1; }
.rule { width: 64px; height: 2px; background: #000; margin-right: 2px; }
.title {
  flex: 1;
  display: flex;
  align-items: center;
  justify-content: center;
  gap: 14px;
  color: #fff;
  white-space: nowrap;
  background:
    radial-gradient(ellipse 18px 16px at 14px 18px, #a98a9e, transparent),
    linear-gradient(90deg, transparent 62px, #d99c9c 70px, #d99c9c 102px, transparent 110px) 0 8px / 100% 16px no-repeat,
    linear-gradient(90deg, #3a0808, #240202 60%);
  border-bottom: 1px solid #a77;
}
.expand { width: 14px; background: linear-gradient(#888, #555); }
.expand svg { width: 6px; height: 8px; }
.search {
  width: 180px;
  margin: 1px 4px 1px 0;
  border: 1px solid #999;
  background: #f4f4f4;
  padding: 3px 2px 0;
  font: italic 11px/16px "Open Sans", sans-serif;
}
.search::placeholder { color: #777; }

.tabs { display: flex; align-items: flex-end; gap: 1px; height: 20px; padding-left: 4px; color: #eee; }
.tabs button { height: 18px; padding: 0 10px; }
.tabs .on { color: #333; background: linear-gradient(#d8d8d8, #fff); border-radius: 2px 2px 0 0; }
.tabs .fold { padding-left: 22px; }
.fold svg { width: 24px; height: 8px; }

/* ribbon */
.ribbon { display: flex; flex: none; height: 99px; padding-left: 2px; background: linear-gradient(#ccc, #8c8c8c); border-bottom: 1px solid #eee; }
.panel { flex: none; display: flex; flex-direction: column; background: #fff; border-right: 1px solid #aaa; }
.panel-body { display: flex; height: 80px; padding-top: 5px; align-items: flex-start; }
.panel h2 {
  position: relative;
  display: flex;
  align-items: center;
  justify-content: center;
  gap: 6px;
  height: 18px;
  margin: 0 1px;
  padding-bottom: 2px;
  background: #eee;
  border-top: 1px solid #ddd;
}
.panel .with-launch { padding-right: 12px; }
.launch { position: absolute; right: 3px; bottom: 4px; width: 7px; height: 7px; }
.p-nav { width: 84px; }
.p-views { width: 240px; }
.p-coord { width: 307px; }
.p-vports { width: 173px; }
.p-pal { width: 114px; }
.p-win { width: 327px; }
.p-nav .panel-body { padding-left: 6px; }
.col { display: flex; flex-direction: column; align-items: flex-start; }
.cmd { height: 24px; gap: 5px; white-space: nowrap; }
.cmd .caret { margin-left: 2px; }
.cmd:disabled { color: #aaa; }
.p-views .panel-body { padding-left: 2px; gap: 9px; }
.gallery { display: flex; width: 124px; height: 62px; margin-top: 5px; border: 1px solid #bbb; }
.gallery-list { flex: 1; }
.gallery-list button { height: 20px; gap: 2px; padding-left: 2px; }
.gallery-scroll { display: flex; flex-direction: column; width: 14px; }
.gallery-scroll button { flex: 1; border: solid #ccc; border-width: 0 0 1px 1px; background: #f4f4f4; }
.gallery-scroll svg { width: 8px; height: 8px; fill: #444; }
.p-coord .panel-body { padding-left: 3px; gap: 3px; padding-right: 2px; }
.tools { display: grid; gap: 2px 0; padding-top: 1px; flex: none; }
.tools.three { grid-template-columns: repeat(3, 24px); }
.tools.one { grid-template-columns: 24px; }
.tools button { height: 22px; border: 1px solid #ccc; background: #fafafa; }
.mark { font: bold 8px "Open Sans", sans-serif; fill: #1d5fa6; }
.mark.large { font-size: 10px; }
.letter { font: bold 8px "Open Sans", sans-serif; fill: #222; }
.grow { flex: 1; }
.ucs { width: 100%; height: 22px; margin: 1px 0; padding-left: 3px; gap: 1px; border: 1px solid #bbb; background: linear-gradient(#fdfdfd, #e8e8e8); }
.ucs select { flex: 1; color: #3a3a3a; }
.p-coord .cmd { padding-left: 3px; }
.p-vports .panel-body { padding-left: 7px; }
.p-vports .left { width: 114px; }
.p-vports .left .caret { margin-left: 1px; }
.big-cmd { flex-direction: column; justify-content: flex-start; height: 72px; position: relative; line-height: 15px; }
.big-cmd svg { width: 32px; height: 32px; margin: 2px 0 4px; }
.big-cmd > .caret { margin-top: 3px; }
.big-cmd.side > .caret { position: absolute; right: -8px; bottom: 16px; }
.p-pal .panel-body { padding-left: 2px; gap: 1px; }
.big-cmd.on { width: 60px; border: 1px solid #1f62b5; background: linear-gradient(#a9cdf2, #c5e0fb); }
.big-cmd.on svg { margin-bottom: 3px; }
.tools.pal { grid-template-columns: 24px 24px; }
.pal button { border-color: #1f62b5; background: #b5d6f7; }
.p-win .panel-body { padding-left: 12px; }
.p-win .tile { margin-left: 15px; width: 117px; }
.right-cmds { display: flex; gap: 17px; border-left: 1px solid #ccc; padding-left: 15px; }

/* drawing area */
.work { flex: 1; display: flex; padding-top: 5px; }
.doc { flex: 1; min-width: 0; display: flex; flex-direction: column; border: solid #eee; border-width: 3px 2px 0 0; border-top-color: #999; }
.canvas { position: relative; flex: 1; background: #212830; border-left: 2px solid #888; }
.scene { position: absolute; inset: 0; width: 100%; height: 100%; }
.axis { font: 300 17px Lato, sans-serif; }
.vp-label { position: absolute; left: 4px; top: 4px; display: flex; gap: 6px; color: #e6e6e6; font-weight: 500; }
.vp-win { position: absolute; right: 10px; top: 7px; display: flex; gap: 8px; }
.vp-win svg { width: 12px; height: 12px; }
.cube-box { position: absolute; right: 14px; top: 67px; width: 136px; display: flex; flex-direction: column; align-items: center; gap: 22px; }
.cube-box > svg { width: 136px; height: 102px; }
.face { font: bold 10px "Open Sans", sans-serif; fill: #42464f; }
.face.small { font-size: 9px; }
.wind { font: bold 15px "Liberation Sans", sans-serif; fill: #a5a7ab; }
.ucs-pick { width: 68px; height: 18px; gap: 4px; border: 1px solid #a5a7ae; border-radius: 4px; background: #83868e; color: #41454d; font-family: "Liberation Sans", sans-serif; }
.ucs-pick svg { width: 10px; height: 6px; }
.navbar {
  position: absolute;
  right: 3px;
  top: 234px;
  width: 32px;
  height: 250px;
  display: flex;
  flex-direction: column;
  align-items: center;
  gap: 3px;
  border-radius: 3px;
  background: #575c64;
  border: 1px solid #646972;
  color: #41464e;
}
.navbar svg { width: 24px; height: 24px; }
.navbar .tiny { align-self: flex-end; margin-bottom: 5px; }
.navbar .tiny:last-child { margin: auto 0 2px; }
.navbar .tiny svg { width: 8px; height: 8px; }
.navbar .caret { border-top-color: #3d424a; margin: 3px 0 4px; }
.sheets { display: flex; align-items: center; height: 19px; padding: 2px 0 1px 3px; background: #eee; border-top: 2px solid #6e6560; font: 11px/16px "Liberation Sans", sans-serif; color: #111; }
.step { width: 15px; height: 16px; border-right: 1px solid #bbb; }
.step svg { width: 10px; height: 10px; fill: #444; }
.sheet { height: 16px; padding: 0 5px 0 3px; }
.sheet.on { width: 52px; padding: 0 2px 0 0; color: #fff; background: #8b6847; clip-path: polygon(0 0, 100% 0, 46px 100%, 5px 100%); margin-left: 1px; }
.slash { width: 7px; height: 16px; }

.docks { width: 36px; padding-left: 4px; flex: none; }
.dock { width: 25px; border: 1px solid #333; background: #eee; margin-bottom: 1px; }
.dock button { width: 23px; height: 22px; }
.dock hr { height: 1px; margin: 2px 2px 3px; border: 0; background: #999; }
.grip {
  display: block;
  height: 8px;
  border: solid #777;
  border-width: 2px 5px;
  background:
    repeating-linear-gradient(transparent 0 1px, #777 1px 2px),
    repeating-linear-gradient(90deg, #111 0 1px, #777 1px 2px);
}
.dock:last-child .grip { height: 7px; }

/* command line */
.console { display: flex; flex: none; height: 64px; margin: 4px 4px 0 0; background: #fff; }
.console-side { width: 15px; background: #999; }
.console-side .grip { border-width: 2px 1px; border-color: #999; }
.console-text { flex: 1; font: 12px/15px "DejaVu Sans Mono", monospace; color: #111; padding: 2px 0 0 2px; }
.prompt { display: flex; align-items: center; height: 17px; border-top: 1px solid #999; padding-top: 3px; }
.prompt input { flex: 1; border: 0; padding: 0; height: 14px; font: inherit; outline: 0; }

/* status bar */
.status { display: flex; flex: none; height: 22px; border-top: 1px solid #111; background: linear-gradient(#777, #8c8c8c); color: #111; font: 11px/20px "Liberation Sans", sans-serif; }
.coords { width: 190px; padding: 2px 0 0 12px; }
.modes, .spaces { display: flex; border-left: 1px solid #555; }
.modes button, .spaces button { width: 22px; border-right: 1px solid #555; background: linear-gradient(#c5c5c5, #999); }
.modes .on { background: linear-gradient(#d8eef8, #8fc4da); }
.spaces { margin-left: auto; margin-right: 3px; }
.spaces .model { width: 44px; }

/* taskbar */
.taskbar { display: flex; flex: none; height: 39px; padding-left: 8px; border-top: 2px solid #b08080; background: linear-gradient(90deg, #7a0b0f, #750a0c 50%, #7f1214 80%, #740d0f); overflow: hidden; }
.start { width: 38px; margin-right: 14px; }
.start svg { width: 38px; height: 38px; }
.task {
  position: relative;
  width: 58px;
  height: 38px;
  margin-right: 4px;
  border: 1px solid #b98084;
  border-radius: 3px;
  background: linear-gradient(115deg, #b98084, #862c31 45%, #7d191d);
}
.task svg { width: 32px; height: 32px; }
.stack { width: 54px; margin-right: 8px; box-shadow: 3px 0 0 -1px #7a0b0f, 4px 0 0 0 #a86a6d; }
.plain { width: 56px; margin-right: 6px; border-color: transparent; background: none; }
.active { background: linear-gradient(115deg, #e6c9cb, #b1686c); }
.badge { position: absolute; right: 14px; bottom: 4px; font: bold 8px/8px "Open Sans", sans-serif; color: #fff; }
.revit { position: absolute; left: 18px; top: 3px; font: bold 22px/22px "Open Sans", sans-serif; color: #a84fc0; }
.word { position: absolute; left: 15px; top: 8px; font: bold 15px/16px "Liberation Serif", serif; color: #264f9c; }
```
